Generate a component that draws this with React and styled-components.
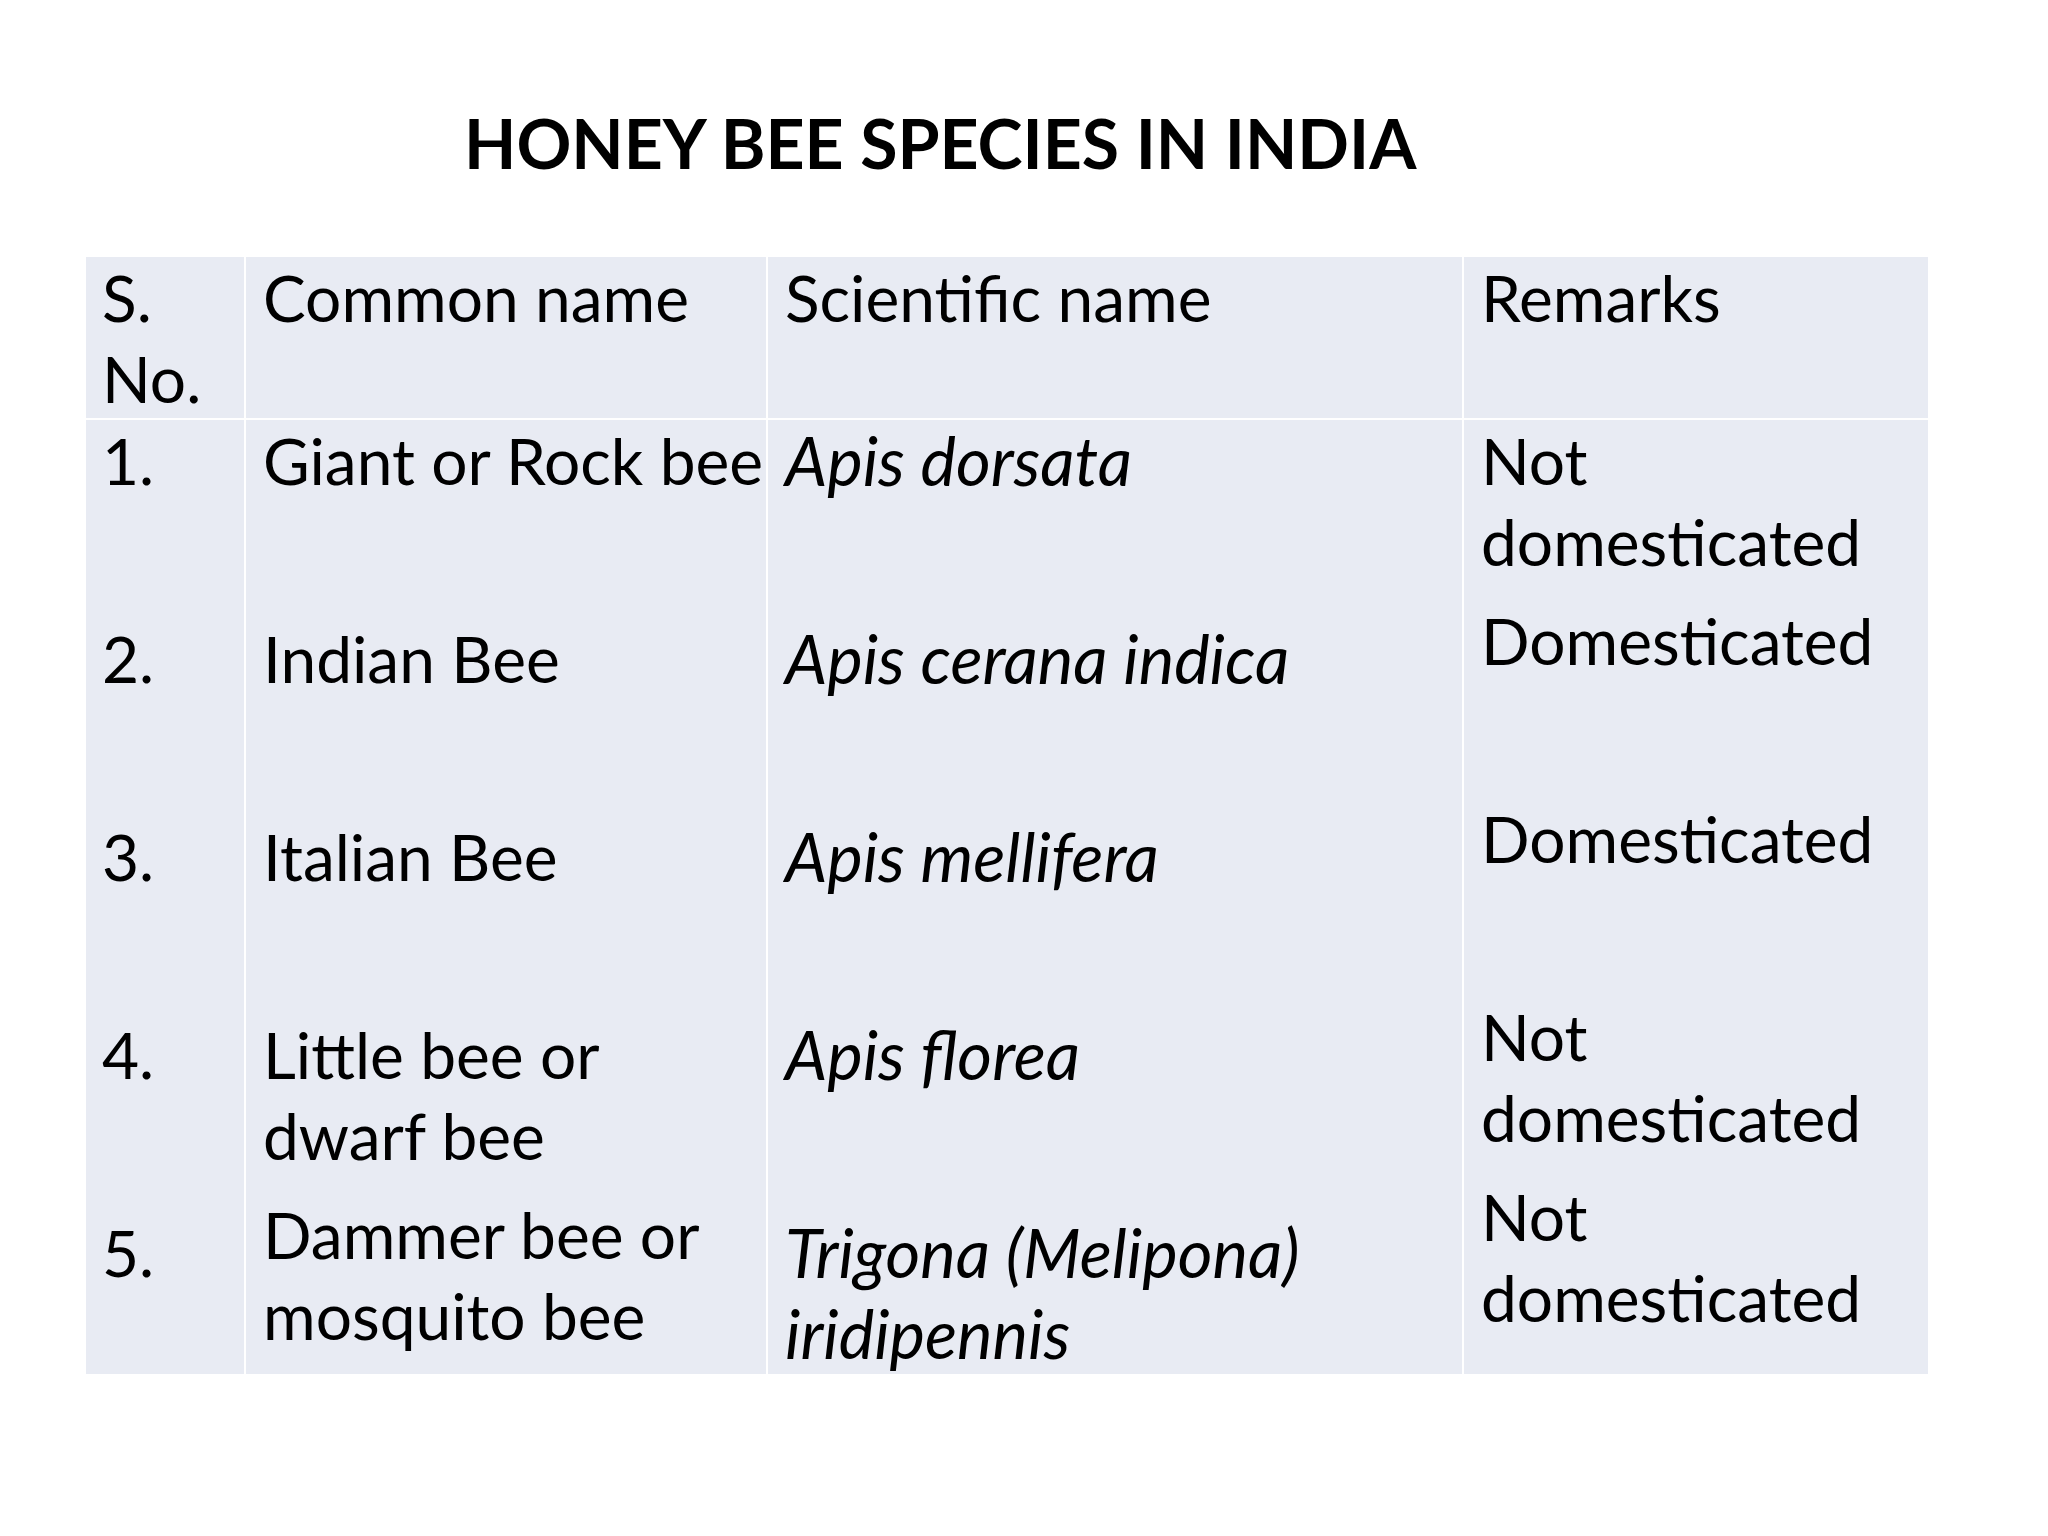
import React from "react";
import styled, { createGlobalStyle } from "styled-components";

const GlobalStyle = createGlobalStyle`
  html, body {
    margin: 0;
    padding: 0;
    background: #ffffff;
  }
  body {
    font-family: Lato, "Open Sans", sans-serif;
    color: #000000;
  }
`;

const Slide = styled.div`
  width: 2048px;
  height: 1536px;
  background: #ffffff;
  display: flex;
  flex-direction: column;
  box-sizing: border-box;
  padding: 103px 0 0 86px;
`;

const Title = styled.h1`
  margin: 0 0 0 378px;
  font-family: Lato, sans-serif;
  font-weight: 700;
  font-size: 68px;
  line-height: 80px;
  height: 80px;
  white-space: nowrap;
`;

const Table = styled.div`
  margin-top: 74px;
  width: 1842px;
  display: flex;
  flex-direction: column;
  gap: 2px;
`;

const Grid = styled.div`
  display: grid;
  grid-template-columns: 158px 520px 694px 464px;
  column-gap: 2px;
`;

const Cell = styled.div`
  background: #e8ebf3;
  box-sizing: border-box;
  height: ${(p) => p.h}px;
  padding: ${(p) => p.pad}px 8px 0 ${(p) => (p.first ? 16 : 17)}px;
  font-size: ${(p) => (p.italic ? 67 : 64)}px;
  line-height: 81px;
  font-style: ${(p) => (p.italic ? "italic" : "normal")};
  white-space: nowrap;
`;

const header = ["S.|No.", "Common name", "Scientific name", "Remarks"];

const rows = [
  {
    h: 180,
    pads: [0, 0, 0, 0],
    cells: ["1.", "Giant or Rock bee", "Apis dorsata", "Not|domesticated"],
  },
  {
    h: 198,
    pads: [18, 18, 18, 0],
    cells: ["2.", "Indian Bee", "Apis cerana indica", "Domesticated"],
  },
  {
    h: 198,
    pads: [18, 18, 18, 0],
    cells: ["3.", "Italian Bee", "Apis mellifera", "Domesticated"],
  },
  {
    h: 180,
    pads: [18, 18, 18, 0],
    cells: ["4.", "Little bee or|dwarf bee", "Apis florea", "Not|domesticated"],
  },
  {
    h: 198,
    pads: [36, 18, 36, 0],
    cells: [
      "5.",
      "Dammer bee or|mosquito bee",
      "Trigona (Melipona)|iridipennis",
      "Not|domesticated",
    ],
  },
];

const Lines = ({ text }) =>
  text.split("|").map((line, i) => (
    <React.Fragment key={i}>
      {i > 0 && <br />}
      {line}
    </React.Fragment>
  ));

export default function App() {
  return (
    <>
      <GlobalStyle />
      <Slide>
        <Title>HONEY BEE SPECIES IN INDIA</Title>
        <Table>
          <Grid>
            {header.map((t, i) => (
              <Cell key={i} h={161} pad={0} first={i === 0}>
                <Lines text={t} />
              </Cell>
            ))}
          </Grid>
          <Grid>
            {rows.map((row, r) =>
              row.cells.map((t, i) => (
                <Cell
                  key={`${r}-${i}`}
                  h={row.h}
                  pad={row.pads[i]}
                  first={i === 0}
                  italic={i === 2}
                >
                  <Lines text={t} />
                </Cell>
              ))
            )}
          </Grid>
        </Table>
      </Slide>
    </>
  );
}
